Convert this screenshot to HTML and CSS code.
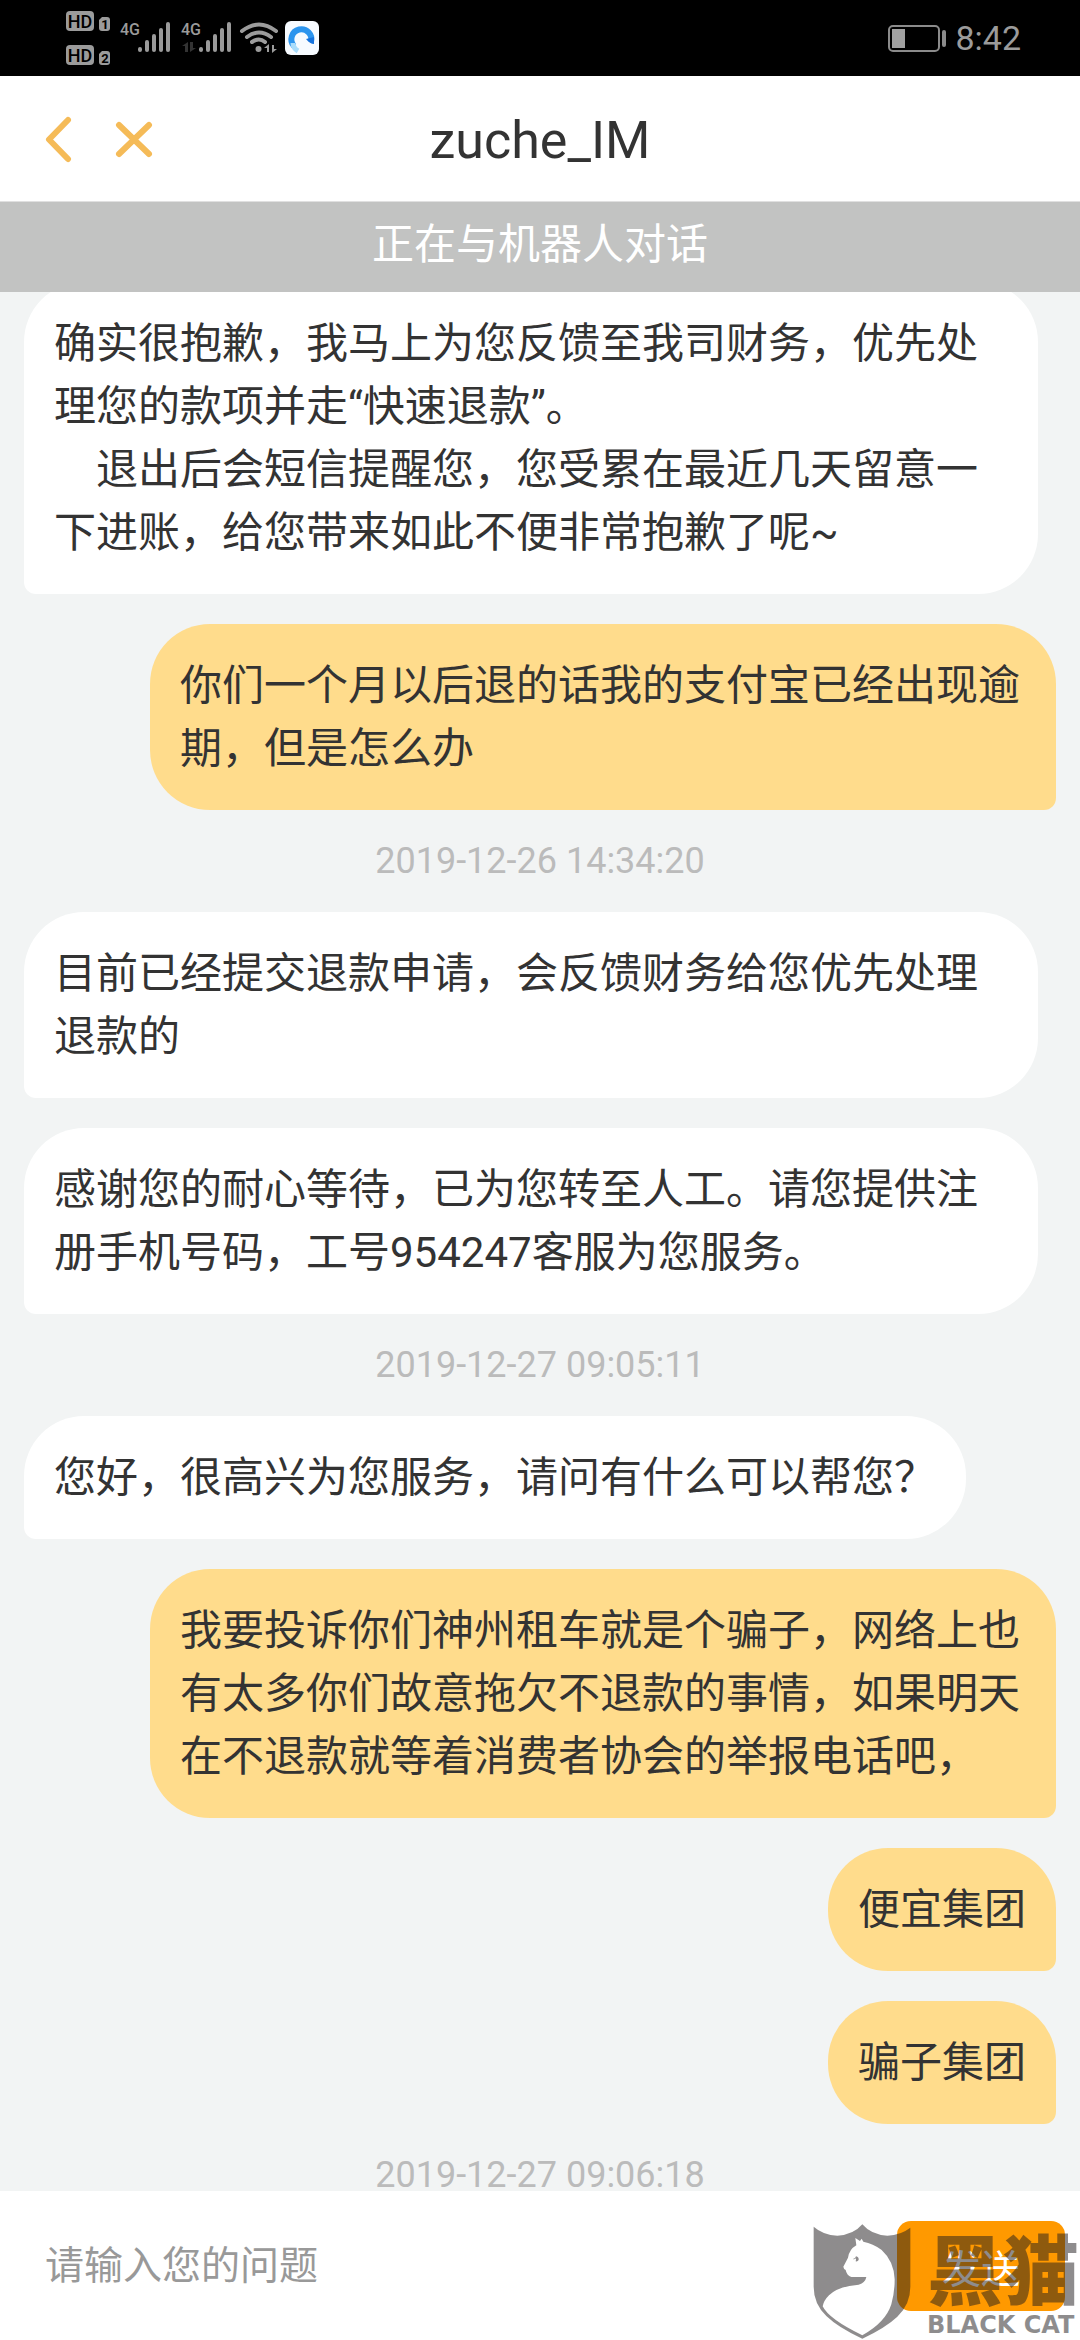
FILE: index.html
```html
<!DOCTYPE html>
<html lang="zh-CN">
<head>
  <meta charset="UTF-8">
  <meta name="viewport" content="width=device-width, initial-scale=1">
  <title>zuche_IM</title>
  <link rel="stylesheet" href="styles.css">
</head>
<body>
  <!-- 状态栏 -->
  <div class="status-bar">
    <svg class="status-icons" width="256" height="76" viewBox="64 0 256 76" fill="#9b9b9b">
      <rect x="66" y="11" width="28" height="20" rx="4"/>
      <rect x="66" y="45" width="28" height="20" rx="4"/>
      <path d="M102 17h5q3 0 3 3v8q0 3-3 3h-5q-3 0-3-3v-8z"/>
      <path d="M102 51h5q3 0 3 3v8q0 3-3 3h-5q-3 0-3-3v-8z"/>
      <g class="hd-text" fill="#000" text-anchor="middle">
        <text x="80" y="28">HD</text>
        <text x="80" y="62">HD</text>
      </g>
      <g class="sim-text" fill="#000" text-anchor="middle">
        <text x="105" y="29">1</text>
        <text x="105" y="63">2</text>
      </g>
      <g class="net-text">
        <text x="120" y="35">4G</text>
        <text x="181" y="35">4G</text>
      </g>
      <g fill="none" stroke="#9b9b9b" stroke-width="4" stroke-linecap="round">
        <path d="M140 49v1M147 42v8M154 36v14M161 30v20M168 24v26"/>
        <path d="M201 49v1M208 42v8M215 36v14M222 30v20M229 24v26"/>
        <path d="M242 31q17-13 34 0M247 37q12-9 24 0M252 42q7-5 13 0"/>
      </g>
      <circle cx="258.500" cy="49" r="3"/>
      <path d="M269 44v8h-2v-4h-3zM272 53v-8h2v4h3z"/>
      <path fill="#333" d="M188 42v10h-3v-6h-3zM190 52v-10h3v6h3z"/>
      <rect x="285" y="21" width="34" height="34" rx="6" fill="#f7fbff"/>
      <path d="M294 46A10 10 0 1 1 311 42" fill="none" stroke="#2c95ee" stroke-width="6"/>
      <path d="M306 39l8-2v7q-4 0-8-5z" fill="#1673dd"/>
      <path d="M293 43q0 5 5 8" fill="none" stroke="#a8dcfb" stroke-width="5"/>
    </svg>
    <div class="status-right">
      <svg width="60" height="30" viewBox="886 22 60 30">
        <rect x="888" y="25" width="50" height="25" rx="4" fill="none" stroke="#8b8b8b" stroke-width="2"/>
        <rect x="891" y="28" width="13" height="19" fill="#a0a0a0"/>
        <rect x="941" y="29" width="4" height="17" rx="2" fill="#8b8b8b"/>
      </svg>
      <span class="clock">8:42</span>
    </div>
  </div>

  <!-- 标题栏 -->
  <header class="nav">
    <div class="nav-buttons">
      <button type="button" aria-label="返回">
        <svg width="30" height="48" viewBox="44 114 30 48"><path d="M68 119L49 138.500L68 158"/></svg>
      </button>
      <button type="button" aria-label="关闭">
        <svg width="38" height="38" viewBox="115 120 38 38"><path d="M119 125L149 154M149 125L119 154"/></svg>
      </button>
    </div>
    <h1>zuche_IM</h1>
  </header>

  <!-- 聊天记录 -->
  <main class="chat">
    <div class="notice">正在与机器人对话</div>
    <div class="messages">
      <div class="bubble left">确实很抱歉，我马上为您反馈至我司财务，优先处理您的款项并走“快速退款”。<br>　退出后会短信提醒您，您受累在最近几天留意一下进账，给您带来如此不便非常抱歉了呢~</div>
      <div class="bubble right">你们一个月以后退的话我的支付宝已经出现逾期，但是怎么办</div>
      <time>2019-12-26 14:34:20</time>
      <div class="bubble left">目前已经提交退款申请，会反馈财务给您优先处理退款的</div>
      <div class="bubble left">感谢您的耐心等待，已为您转至人工。请您提供注册手机号码，工号954247客服为您服务。</div>
      <time>2019-12-27 09:05:11</time>
      <div class="bubble left">您好，很高兴为您服务，请问有什么可以帮您？</div>
      <div class="bubble right">我要投诉你们神州租车就是个骗子，网络上也有太多你们故意拖欠不退款的事情，如果明天在不退款就等着消费者协会的举报电话吧，</div>
      <div class="bubble right">便宜集团</div>
      <div class="bubble right">骗子集团</div>
      <time>2019-12-27 09:06:18</time>
    </div>
  </main>

  <!-- 输入栏 -->
  <footer class="composer">
    <input type="text" placeholder="请输入您的问题" aria-label="请输入您的问题">
    <button type="button" class="send">发送</button>
    <div class="watermark">
      <svg width="98" height="116" viewBox="92 104 294 348">
        <path fill="#201c1d" fill-rule="evenodd" d="M94 112Q122 137 165 139Q213 137 240 105Q267 137 315 139Q356 137 384 115V292Q384 345 345 382Q310 415 240 448Q168 415 132 380Q94 343 94 292Z
          M219 146L222 168Q201 180 197 205L183 232Q184 240 190 242Q193 258 207 263L252 263Q249 280 229 286Q165 292 140 318Q124 334 121 351Q139 389 240 438Q310 399 327 345Q337 310 337 270Q335 216 298 182Q272 162 243 157L238 148L233 155Z"/>
        <path fill="#201c1d" d="M212 209q8-1 9-8q9 2 8 11q-4 6-9 4q3-7-1-9q-2 4-7 2z"/>
      </svg>
      <div class="brand">
        <span class="brand-cn">黑猫</span>
        <span class="brand-en">BLACK CAT</span>
      </div>
    </div>
  </footer>
</body>
</html>
```
FILE: styles.css
```css
* {
  box-sizing: border-box;
}
body {
  margin: 0;
  height: 100vh;
  display: flex;
  flex-direction: column;
  font-family: Roboto, "Noto Sans CJK SC", sans-serif;
  font-size: 42px;
  line-height: 63px;
  color: #333;
  background: #f2f4f4;
}
button {
  border: 0;
  padding: 0;
  background: none;
  font-family: inherit;
}
svg {
  display: block;
}

/* 状态栏 */
.status-bar {
  flex: none;
  height: 76px;
  padding: 0 59px 0 64px;
  display: flex;
  align-items: center;
  justify-content: space-between;
  background: #000;
}
.hd-text {
  font: 500 18px Roboto, sans-serif;
}
.sim-text {
  font: bold 13px Roboto, sans-serif;
}
.net-text {
  font: 500 16px Roboto, sans-serif;
}
.status-right {
  display: flex;
  align-items: center;
  gap: 8px;
}
.clock {
  font-size: 34px;
  line-height: 76px;
  color: #9b9b9b;
}

/* 标题栏 */
.nav {
  flex: none;
  position: relative;
  height: 126px;
  display: flex;
  align-items: center;
  justify-content: center;
  background: #fff;
  border-bottom: 1px solid #e0e0e0;
}
.nav-buttons {
  position: absolute;
  left: 44px;
  display: flex;
  align-items: center;
  gap: 41px;
}
.nav-buttons path {
  fill: none;
  stroke: #f5bb58;
  stroke-width: 6;
  stroke-linecap: round;
  stroke-linejoin: round;
}
.nav h1 {
  margin: 0;
  padding-top: 4px;
  font-size: 52px;
  font-weight: 400;
}

/* 聊天记录 */
.chat {
  flex: 1;
  min-height: 0;
  position: relative;
  overflow: hidden;
}
.notice {
  position: absolute;
  top: 0;
  left: 0;
  right: 0;
  height: 90px;
  line-height: 86px;
  text-align: center;
  color: #fff;
  background: #c2c3c2;
}
.messages {
  display: flex;
  flex-direction: column;
  align-items: flex-start;
  gap: 30px;
  padding: 80px 24px 0;
}
.bubble {
  padding: 30px;
}
.left {
  margin-right: 18px;
  background: #fff;
  border-radius: 60px 60px 60px 12px;
}
.right {
  align-self: flex-end;
  margin-left: 126px;
  background: #ffdc8c;
  border-radius: 60px 60px 12px 60px;
}
.messages time {
  align-self: center;
  font-size: 36px;
  line-height: 42px;
  color: #bbb;
}

/* 输入栏 */
.composer {
  flex: none;
  position: relative;
  height: 149px;
  padding: 0 15px 0 45px;
  display: flex;
  align-items: center;
  background: #fff;
}
.composer input {
  flex: 1;
  min-width: 0;
  height: 90px;
  border: 0;
  padding: 0;
  outline: 0;
  font-family: inherit;
  font-size: 39px;
  background: none;
}
.composer input::placeholder {
  color: #999;
}
.send {
  width: 168px;
  height: 90px;
  border-radius: 14px;
  font-size: 39px;
  color: #fff;
  background: #f90;
}
.watermark {
  position: absolute;
  right: 1px;
  bottom: 0;
  display: flex;
  align-items: flex-end;
  gap: 16px;
  opacity: 0.5;
  color: #201c1d;
  pointer-events: none;
}
.brand {
  display: flex;
  flex-direction: column;
  gap: 5px;
}
.brand-cn {
  font-family: "Noto Sans CJK SC", sans-serif;
  font-size: 76px;
  font-weight: 900;
  line-height: 78px;
}
.brand-en {
  font-family: "DejaVu Sans", sans-serif;
  font-size: 24px;
  font-weight: 700;
  line-height: 30px;
  white-space: nowrap;
}
```
